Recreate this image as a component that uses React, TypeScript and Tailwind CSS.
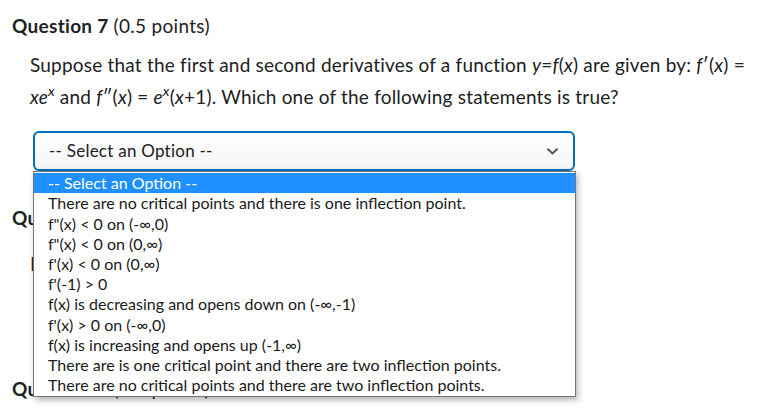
const options = [
    '-- Select an Option --',
    'There are no critical points and there is one inflection point.',
    'f"(x) < 0 on (-∞,0)',
    'f"(x) < 0 on (0,∞)',
    "f'(x) < 0 on (0,∞)",
    "f'(-1) > 0",
    'f(x) is decreasing and opens down on (-∞,-1)',
    "f'(x) > 0 on (-∞,0)",
    'f(x) is increasing and opens up (-1,∞)',
    'There are is one critical point and there are two inflection points.',
    'There are no critical points and there are two inflection points.',
]

function QuestionTitle({ n }: { n: number }) {
    return (
        <h2 className="ml-3 text-[19px] leading-6 tracking-[0.3px] font-bold text-[#202122]">
            Question {n} <span className="font-normal">(0.5 points)</span>
        </h2>
    )
}

function SelectBox({ open }: { open?: boolean }) {
    return (
        <div className="relative ml-[33px] w-[542px]">
            <div
                className={`h-10 flex items-center justify-between pl-[14px] pr-[15px] rounded-md border-2 bg-gradient-to-b from-white to-[#f4f4f4] ${open ? 'border-[#006fbf]' : 'border-[#cdd5dc]'
                    }`}
            >
                <span className="text-[17px] tracking-[0.25px] text-[#202122]">-- Select an Option --</span>
                <svg width="11" height="7" viewBox="0 0 11 7" className="mt-px">
                    <path d="M1 1.2 L5.5 5.4 L10 1.2" fill="none" stroke="#565a5c" strokeWidth="2" strokeLinecap="round" strokeLinejoin="round" />
                </svg>
            </div>

            {/* native option list */}
            {open && (
                <ul className="absolute left-0 top-full w-[543px] bg-white border border-[#767676] py-px shadow-[2px_3px_6px_rgba(0,0,0,0.3)] z-10">
                    {options.map((opt, idx) => (
                        <li
                            key={idx}
                            className={`h-[20.2px] leading-[20px] pl-[14px] text-[16px] whitespace-nowrap ${idx === 0 ? 'bg-[#1e90ff] text-white' : 'text-[#1a1a1a]'
                                }`}
                        >
                            {opt}
                        </li>
                    ))}
                </ul>
            )}
        </div>
    )
}

export default function App() {
    return (
        <div className="w-[783px] h-[408px] overflow-hidden bg-white font-['Lato',sans-serif] text-[#202122]">
            {/* Question 7 */}
            <div className="pt-[14px]">
                <QuestionTitle n={7} />
                <p className="ml-[30px] mr-2 mt-[11px] text-[19px] tracking-[0.2px] leading-[31.6px] [font-variant-ligatures:none]">
                    Suppose that the first and second derivatives of a function <i>y</i>=<i>f</i>(<i>x</i>) are given by: <i>f</i>′(<i>x</i>) =
                    <br />
                    <i>x</i><i>e</i><sup><i>x</i></sup> and <i>f</i>″(<i>x</i>) = <i>e</i><sup><i>x</i></sup>(<i>x</i>+1). Which one of the following statements is true?
                </p>
                <div className="mt-[19px]">
                    <SelectBox open />
                </div>
            </div>

            {/* Question 8 */}
            <div className="mt-[35px]">
                <QuestionTitle n={8} />
                <p className="ml-[30px] mt-[18px] text-[19px] tracking-[0.2px] leading-[31.6px]">
                    If <i>f</i>(<i>x</i>) has a local maximum, which one of the following is true?
                </p>
                <div className="mt-[19px]">
                    <SelectBox />
                </div>
            </div>

            {/* Question 9 */}
            <div className="mt-[38px]">
                <QuestionTitle n={9} />
            </div>
        </div>
    )
}
